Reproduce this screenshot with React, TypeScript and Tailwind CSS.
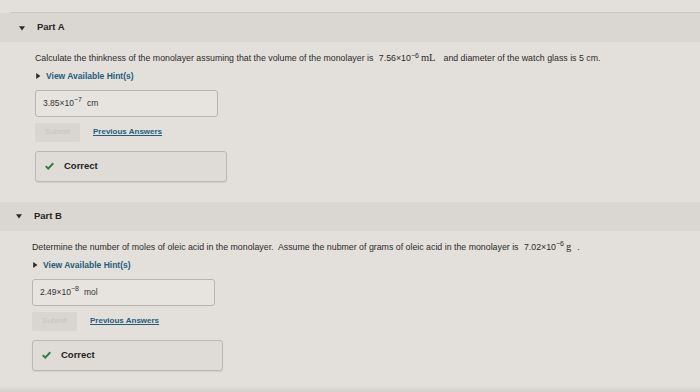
import React from "react";

interface Part {
  label: string;
  indent: string;
  question: React.ReactNode;
  answer: React.ReactNode;
  boxWidth: string;
  correctWidth: string;
}

function Sci({ base, exp, unit, unitSerif }: { base: string; exp: string; unit: string; unitSerif?: boolean }) {
  return (
    <span className="whitespace-nowrap">
      {base}×10
      <sup className="text-[7px]">{exp}</sup>
      <span className={unitSerif ? "ml-[2px] font-['Liberation_Serif',serif] text-[10.5px]" : "ml-[5px]"}>{unit}</span>
    </span>
  );
}

const parts: Part[] = [
  {
    label: "Part A",
    indent: "pl-[35px]",
    boxWidth: "w-[183px]",
    correctWidth: "w-[192px]",
    question: (
      <>
        Calculate the thinkness of the monolayer assuming that the volume of the monolayer is{" "}
        <span className="ml-[3px] mr-[8px]">
          <Sci base="7.56" exp="−6" unit="mL" unitSerif />
        </span>
        and diameter of the watch glass is 5 cm.
      </>
    ),
    answer: <Sci base="3.85" exp="−7" unit="cm" />,
  },
  {
    label: "Part B",
    indent: "pl-[32px]",
    boxWidth: "w-[183px]",
    correctWidth: "w-[191px]",
    question: (
      <>
        Determine the number of moles of oleic acid in the monolayer.&nbsp; Assume the nubmer of grams of oleic acid in the monolayer is{" "}
        <span className="ml-[3px] mr-[6px]">
          <Sci base="7.02" exp="−6" unit="g" unitSerif />
        </span>
        .
      </>
    ),
    answer: <Sci base="2.49" exp="−8" unit="mol" />,
  },
];

function Caret({ open }: { open: boolean }) {
  return (
    <svg className="h-[6px] w-[6px] shrink-0" viewBox="0 0 10 10" fill="#2b2b2b">
      {open ? <path d="M0 2h10L5 9z" /> : <path d="M2 0v10l7-5z" />}
    </svg>
  );
}

function PartSection({ part, headerIndent }: { part: Part; headerIndent: string }) {
  return (
    <div>
      <div className={`flex h-[29px] items-center gap-[12px] bg-[#dad7d2] ${headerIndent}`}>
        <Caret open />
        <span className="text-[9.5px] font-bold text-[#262626]">{part.label}</span>
      </div>

      <div className={`${part.indent} pt-[9px]`}>
        <p className="text-[8.8px] leading-[13px] text-[#2a2a2a]">{part.question}</p>

        <div className="mt-[5px] flex items-center gap-[5px] text-[8.5px] font-bold text-[#245c7c]">
          <Caret open={false} />
          <span>View Available Hint(s)</span>
        </div>

        <div
          className={`mt-[7px] flex h-[27px] items-center rounded-[3px] border border-[#b8b5b0] bg-[#e7e4df] pl-[7px] text-[8.5px] text-[#333] ${part.boxWidth}`}
        >
          {part.answer}
        </div>

        <div className="mt-[6px] flex items-center gap-[13px]">
          <div className="flex h-[19px] w-[45px] items-center justify-center rounded-[2px] bg-[#d9d6d1] text-[8px] text-[#c6c3be]">
            Submit
          </div>
          <span className="text-[8px] font-bold text-[#245c7c] underline">Previous Answers</span>
        </div>

        <div
          className={`mt-[9px] flex h-[31px] items-center gap-[10px] rounded-[3px] border border-[#bcb9b4] bg-[#dfdcd7] pl-[9px] shadow-[0_1px_1px_rgba(0,0,0,0.08)] ${part.correctWidth}`}
        >
          <svg className="h-[8px] w-[9px]" viewBox="0 0 12 10" fill="none" stroke="#2f7d3a" strokeWidth={2.6}>
            <path d="M1 5.2l3.3 3.2L11 1.3" />
          </svg>
          <span className="text-[9.5px] font-bold text-[#222]">Correct</span>
        </div>
      </div>
    </div>
  );
}

export default function App() {
  return (
    <div className="h-[392px] w-[700px] overflow-hidden bg-[#e3e0db] font-['Liberation_Sans',Arial,sans-serif]">
      <div className="ml-[10px] h-[13px] border-b border-[#cac7c2]" />
      <PartSection part={parts[0]} headerIndent="pl-[19px]" />
      <div className="h-[20px]" />
      <PartSection part={parts[1]} headerIndent="pl-[16px]" />
      <div className="mt-[15px] h-[8px] bg-gradient-to-b from-[#e3e0db] to-[#cfccc7]" />
    </div>
  );
}
